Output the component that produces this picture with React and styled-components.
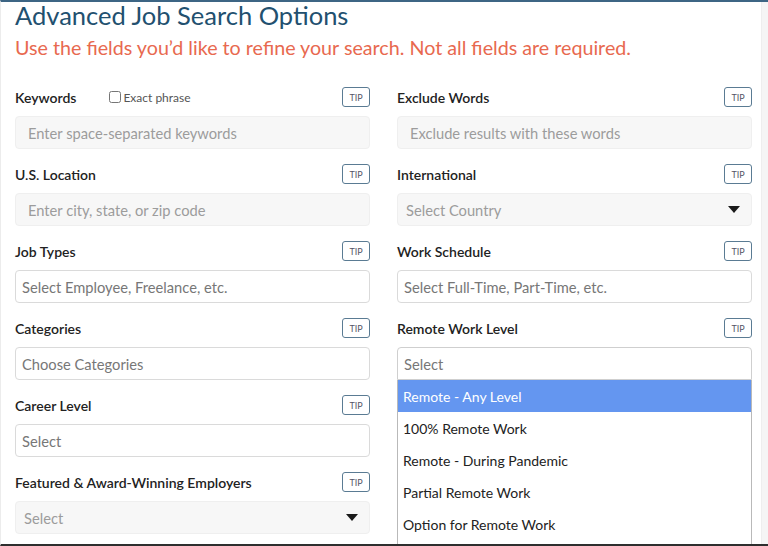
import React from 'react';
import styled, { createGlobalStyle } from 'styled-components';

const GlobalStyle = createGlobalStyle`
  html, body {
    margin: 0;
    padding: 0;
    background: #fff;
  }
  body {
    font-family: Lato, "Open Sans", "Liberation Sans", sans-serif;
  }
`;

const Frame = styled.div`
  box-sizing: border-box;
  height: 546px;
  overflow: hidden;
  border-top: 2px solid #3d6584;
  border-bottom: 2px solid #2e2e2e;
  border-left: 1px solid #ececec;
  display: flex;
`;

const Page = styled.div`
  flex: 1;
  padding: 0 9px 0 14px;
`;

const ScrollTrack = styled.div`
  width: 6px;
  background: #f5f5f5;
  border-left: 1px solid #eeeeee;
`;

const Title = styled.h1`
  margin: 0;
  font-size: 25.5px;
  font-weight: 400;
  color: #22506f;
  line-height: 26px;
`;

const Subtitle = styled.p`
  margin: 9px 0 0;
  font-size: 19.7px;
  color: #e8694f;
  line-height: 22px;
`;

const Grid = styled.div`
  margin-top: 28px;
  display: grid;
  grid-template-columns: 355px 355px;
  column-gap: 27px;
  row-gap: 15px;
`;

const Field = styled.div`
  position: relative;
  display: flex;
  flex-direction: column;
  gap: 9px;
`;

const LabelRow = styled.div`
  display: flex;
  align-items: center;
  height: 20px;
`;

const Label = styled.label`
  font-size: 14px;
  font-weight: 600;
  color: #222;
`;

const Check = styled.label`
  display: flex;
  align-items: center;
  gap: 2px;
  margin-left: 33px;
  font-size: 12px;
  color: #555;

  input {
    margin: 0;
    width: 12px;
    height: 12px;
  }
`;

const Tip = styled.button`
  margin-left: auto;
  box-sizing: border-box;
  width: 28px;
  height: 20px;
  padding: 0;
  border: 1.5px solid #5a7b93;
  border-radius: 3px;
  background: #fff;
  font-family: inherit;
  font-size: 9px;
  color: #556;
`;

const Box = styled.div`
  box-sizing: border-box;
  height: 33px;
  display: flex;
  align-items: center;
  padding: 0 ${p => (p.$muted ? (p.$select ? '8px' : '12px') : '6px')};
  border-radius: 4px;
  border: 1px solid ${p => (p.$muted ? '#efefef' : p.$open ? '#cfcfcf' : '#dadada')};
  background: ${p => (p.$muted ? '#f7f7f7' : '#fff')};
  color: ${p => (p.$muted ? '#9c9c9c' : '#777')};
  font-size: 14.7px;
  ${p => p.$open && 'border-bottom-left-radius: 0; border-bottom-right-radius: 0;'}
`;

const Caret = styled.span`
  margin-left: auto;
  margin-right: 3px;
  width: 0;
  height: 0;
  border-left: 6px solid transparent;
  border-right: 6px solid transparent;
  border-top: 7px solid #1a1a1a;
`;

const Menu = styled.ul`
  position: absolute;
  top: 62px;
  left: 0;
  right: 0;
  margin: 0;
  padding: 0;
  list-style: none;
  background: #fff;
  border: 1px solid #b9b9b9;
  border-top: none;
  height: 200px;
`;

const Option = styled.li`
  height: 32px;
  display: flex;
  align-items: center;
  padding: 0 5px;
  font-size: 14px;
  color: ${p => (p.$active ? '#fff' : '#222')};
  background: ${p => (p.$active ? '#6496f0' : '#fff')};
`;

function FormField({ label, extra, children }) {
  return (
    <Field>
      <LabelRow>
        <Label>{label}</Label>
        {extra}
        <Tip type="button">TIP</Tip>
      </LabelRow>
      {children}
    </Field>
  );
}

const remoteOptions = [
  'Remote - Any Level',
  '100% Remote Work',
  'Remote - During Pandemic',
  'Partial Remote Work',
  'Option for Remote Work',
];

export default function App() {
  return (
    <>
      <GlobalStyle />
      <Frame>
        <Page>
          <Title>Advanced Job Search Options</Title>
          <Subtitle>Use the fields you’d like to refine your search. Not all fields are required.</Subtitle>
          <Grid>
            <FormField
              label="Keywords"
              extra={
                <Check>
                  <input type="checkbox" />
                  Exact phrase
                </Check>
              }
            >
              <Box $muted>Enter space-separated keywords</Box>
            </FormField>
            <FormField label="Exclude Words">
              <Box $muted>Exclude results with these words</Box>
            </FormField>

            <FormField label="U.S. Location">
              <Box $muted>Enter city, state, or zip code</Box>
            </FormField>
            <FormField label="International">
              <Box $muted $select>
                Select Country
                <Caret />
              </Box>
            </FormField>

            <FormField label="Job Types">
              <Box>Select Employee, Freelance, etc.</Box>
            </FormField>
            <FormField label="Work Schedule">
              <Box>Select Full-Time, Part-Time, etc.</Box>
            </FormField>

            <FormField label="Categories">
              <Box>Choose Categories</Box>
            </FormField>
            <FormField label="Remote Work Level">
              <Box $open>Select</Box>
              <Menu>
                {remoteOptions.map((o, i) => (
                  <Option key={o} $active={i === 0}>{o}</Option>
                ))}
              </Menu>
            </FormField>

            <FormField label="Career Level">
              <Box>Select</Box>
            </FormField>
            <div />

            <FormField label="Featured & Award-Winning Employers">
              <Box $muted $select>
                Select
                <Caret />
              </Box>
            </FormField>
            <div />
          </Grid>
        </Page>
        <ScrollTrack />
      </Frame>
    </>
  );
}
